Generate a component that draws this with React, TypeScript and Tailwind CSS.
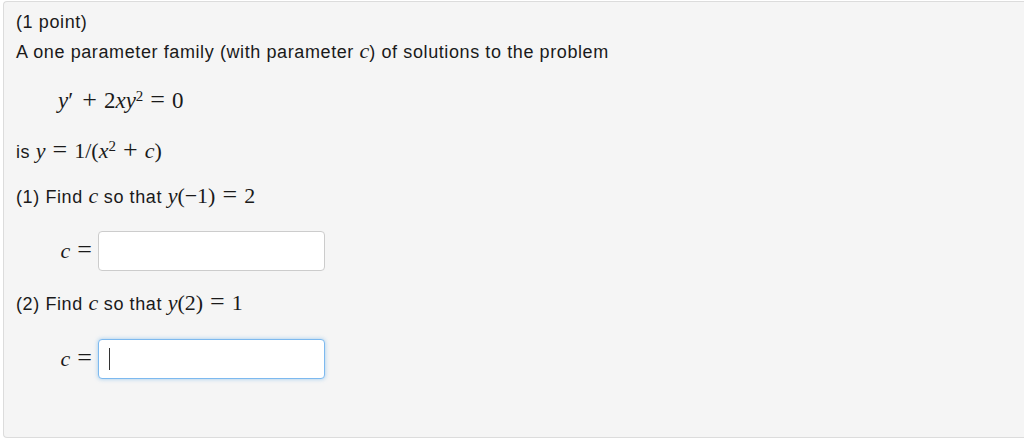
import React from 'react';

const I: React.FC<{ children: React.ReactNode }> = ({ children }) => (
  <span className="italic">{children}</span>
);

const M: React.FC<{ children: React.ReactNode; className?: string }> = ({ children, className = '' }) => (
  <span className={`font-['Liberation_Serif',serif] text-[22px] leading-none tracking-normal ${className}`}>{children}</span>
);

// operators drawn a bit larger so = and + are as wide as the TeX glyphs
const Op: React.FC<{ children: React.ReactNode }> = ({ children }) => (
  <span className="mx-[7px] text-[26px]">{children}</span>
);

const Sup: React.FC<{ children: React.ReactNode }> = ({ children }) => (
  <sup className="text-[15px]">{children}</sup>
);

const Label: React.FC = () => (
  <div className="w-[82px] pr-[6px] text-right">
    <M>
      <I>c</I>
      <span className="ml-[7px] text-[26px]">=</span>
    </M>
  </div>
);

const App: React.FC = () => {
  return (
    <div className="h-[443px] w-[1024px] bg-white pl-[3px] pt-px pb-[5px] font-['Liberation_Sans',Arial,sans-serif] text-[18px] tracking-[0.6px] text-[#1a1a1a]">
      <div className="h-full rounded-l-[4px] border border-r-0 border-[#dcdcdc] bg-[#f5f5f5] pl-[12px] pt-[5px]">
        <div className="leading-[30px]">(1 point)</div>
        <div className="leading-[30px]">
          A one parameter family (with parameter <M><I>c</I></M>) of solutions to the problem
        </div>

        <div className="mt-[20px] pl-[42px] leading-[30px]">
          <M className="text-[23px]">
            <I>y</I>′<span className="ml-[2px]" /><Op>+</Op>2<I>xy</I><Sup>2</Sup><Op>=</Op>0
          </M>
        </div>

        <div className="mt-[20px] leading-[30px]">
          is <M><I>y</I><Op>=</Op>1/(<I>x</I><Sup>2</Sup><Op>+</Op><I>c</I>)</M>
        </div>

        <div className="mt-[15px] leading-[30px]">
          (1) Find <M><I>c</I></M> so that <M><I>y</I>(−1)<Op>=</Op>2</M>
        </div>

        <div className="mt-[19px] flex items-center">
          <Label />
          <input
            type="text"
            className="h-[40px] w-[227px] rounded-[4px] border border-[#cccccc] bg-white px-[10px] outline-none"
          />
        </div>

        <div className="mt-[18px] leading-[30px]">
          (2) Find <M><I>c</I></M> so that <M><I>y</I>(2)<Op>=</Op>1</M>
        </div>

        <div className="mt-[20px] flex items-center">
          <Label />
          <div className="flex h-[40px] w-[227px] items-center rounded-[4px] border border-[#7db9ef] bg-white px-[10px] shadow-[0_0_4px_rgba(102,175,233,0.6)]">
            <span className="h-[22px] w-px bg-[#333]" />
          </div>
        </div>
      </div>
    </div>
  );
};

export default App;
